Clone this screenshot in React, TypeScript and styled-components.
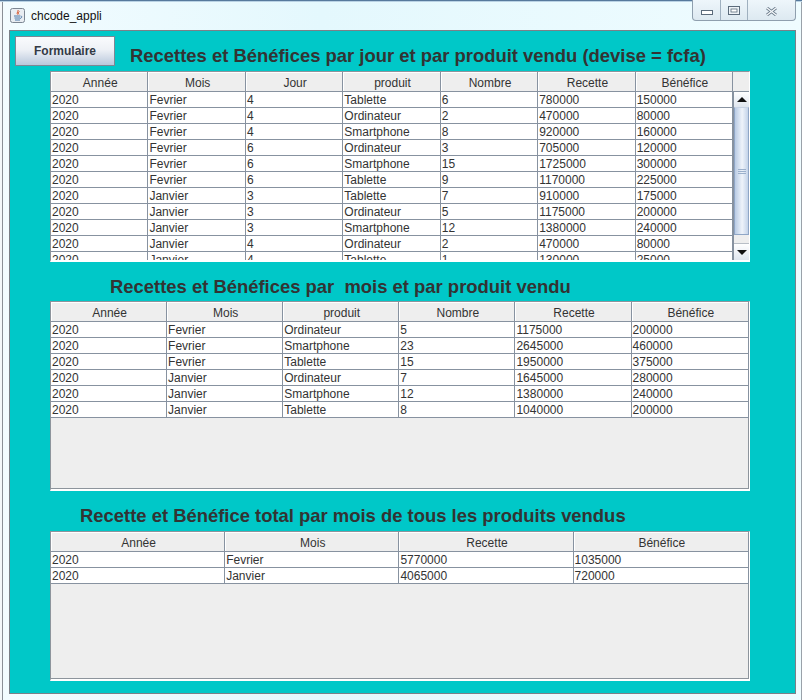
import React from "react";
import styled, { createGlobalStyle } from "styled-components";

const Global = createGlobalStyle`
  html, body { margin: 0; padding: 0; }
  body { width: 802px; height: 700px; overflow: hidden; background: #eafaff; font-family: "Liberation Sans", Arial, sans-serif; }
`;

const Frame = styled.div`
  width: 802px;
  height: 700px;
  box-sizing: border-box;
  padding: 0 6px 6px 9px;
  display: flex;
  flex-direction: column;
  background: linear-gradient(90deg, #f3fcff 0%, #e4f8fd 40%, #effcff 100%);
  box-shadow: inset 0 1px 0 #56799c, inset 0 2px 0 #b9d2e4, inset 2px 0 0 #f4f8fa, inset 3px 0 0 #8a8f96, inset -1px 0 0 #9aa2aa;
`;

const TitleBar = styled.div`
  height: 30px;
  flex: none;
  display: flex;
  align-items: flex-start;
`;

const AppIcon = styled.svg`
  width: 15px;
  height: 15px;
  margin: 8px 6px 0 1px;
  flex: none;
`;

const WindowTitle = styled.span`
  margin-top: 9px;
  font: 12px/15px "Liberation Sans", Arial, sans-serif;
  color: #111;
`;

const Controls = styled.div`
  margin-left: auto;
  width: 104px;
  height: 21px;
  box-sizing: border-box;
  display: flex;
  border: 1px solid #8f9fae;
  border-top: none;
  border-radius: 0 0 4px 4px;
  background: linear-gradient(180deg, #eef6fb, #dde9f1);
`;

const Control = styled.div<{ $w: number; $last?: boolean; $pad: number }>`
  width: ${(p) => p.$w}px;
  display: flex;
  align-items: center;
  justify-content: center;
  padding-top: ${(p) => p.$pad}px;
  box-sizing: border-box;
  border-right: ${(p) => (p.$last ? "none" : "1px solid #9fb0bf")};
`;

const Panel = styled.div`
  flex: 1;
  box-sizing: border-box;
  background: #00c8c8;
  border: 1px solid #7b8088;
  padding: 5px 0 0 5px;
  display: flex;
  flex-direction: column;
`;

const TopRow = styled.div`
  display: flex;
  align-items: flex-start;
  height: 35px;
  flex: none;
`;

const FormButton = styled.button`
  width: 100px;
  height: 30px;
  box-sizing: border-box;
  padding: 0;
  border: 1px solid #7d8794;
  background: linear-gradient(180deg, #fafbfd 0%, #eef1f6 45%, #b9c8dc 100%);
  font: bold 12px "Liberation Sans", Arial, sans-serif;
  color: #333a45;
`;

const Heading = styled.h2<{ $indent: number; $top: number; $bottom?: number }>`
  margin: ${(p) => p.$top}px 0 ${(p) => p.$bottom ?? 0}px ${(p) => p.$indent}px;
  font: bold 18.43px/22px "Liberation Sans", Arial, sans-serif;
  color: #333333;
  white-space: pre;
`;

const TableBox = styled.div<{ $h: number }>`
  margin-left: 35px;
  width: 700px;
  height: ${(p) => p.$h}px;
  box-sizing: border-box;
  flex: none;
  display: flex;
  overflow: hidden;
  background: #eeeeee;
  border: 1px solid #8d949c;
  border-right-color: #fff;
  border-bottom: 2px solid #fff;
  box-shadow: inset -1px -1px 0 #8d949c;
`;

const TableBody = styled.div`
  flex: 1;
  min-width: 0;
  display: flex;
  flex-direction: column;
`;

const HeaderRow = styled.div<{ $cols: number; $col: number }>`
  display: grid;
  grid-template-columns: repeat(${(p) => p.$cols - 1}, ${(p) => p.$col}px) 1fr;
  height: 20px;
  flex: none;
  background: #eeeeee;
  border-bottom: 1px solid #8792a0;
  box-sizing: border-box;
`;

const HeaderCell = styled.div`
  display: flex;
  align-items: center;
  justify-content: center;
  font: 12px "Liberation Sans", Arial, sans-serif;
  color: #333;
  border-right: 1px solid #8792a0;
  box-shadow: inset 1px 1px 0 #fff;
  padding: 3px 0 0 2px;
`;

const Row = styled.div<{ $cols: number; $col: number }>`
  display: grid;
  grid-template-columns: repeat(${(p) => p.$cols - 1}, ${(p) => p.$col}px) 1fr;
  height: 16px;
  flex: none;
  box-sizing: border-box;
  background: #fff;
  border-bottom: 1px solid #8792a0;
`;

const Cell = styled.div`
  font: 12px/17px "Liberation Sans", Arial, sans-serif;
  color: #333;
  padding-left: 1px;
  border-right: 1px solid #8792a0;
  white-space: nowrap;
  overflow: hidden;
`;

const ScrollBar = styled.div`
  width: 16px;
  flex: none;
  display: flex;
  flex-direction: column;
  background: #eeeeee;
  border-left: 1px solid #8792a0;
  box-sizing: border-box;
`;

const Corner = styled.div`
  height: 20px;
  flex: none;
  background: #eee;
  margin-left: -1px;
  border-bottom: 1px solid #8792a0;
  box-sizing: border-box;
`;

const Arrow = styled.div<{ $h: number }>`
  height: ${(p) => p.$h}px;
  flex: none;
  display: flex;
  align-items: center;
  justify-content: center;
  background: linear-gradient(180deg, #ffffff, #dfe6ef);
`;

const Thumb = styled.div`
  height: 128px;
  flex: none;
  box-sizing: border-box;
  border: 1px solid #8fa6c6;
  border-top-color: #c7d3e5;
  background: linear-gradient(90deg, #b9cbe4 0%, #eef3fa 55%, #c3d3e9 100%);
  display: flex;
  flex-direction: column;
  gap: 1px;
  align-items: center;
  justify-content: center;
`;

const Grip = styled.span`
  width: 8px;
  height: 1px;
  background: #9bb0cc;
`;

const Track = styled.div`
  flex: 1;
  background: #eeeeee;
  border-bottom: 1px solid #b8bec6;
`;

type Data = string[][];

const t1h = ["Année", "Mois", "Jour", "produit", "Nombre", "Recette", "Bénéfice"];
const t1: Data = [
  ["2020", "Fevrier", "4", "Tablette", "6", "780000", "150000"],
  ["2020", "Fevrier", "4", "Ordinateur", "2", "470000", "80000"],
  ["2020", "Fevrier", "4", "Smartphone", "8", "920000", "160000"],
  ["2020", "Fevrier", "6", "Ordinateur", "3", "705000", "120000"],
  ["2020", "Fevrier", "6", "Smartphone", "15", "1725000", "300000"],
  ["2020", "Fevrier", "6", "Tablette", "9", "1170000", "225000"],
  ["2020", "Janvier", "3", "Tablette", "7", "910000", "175000"],
  ["2020", "Janvier", "3", "Ordinateur", "5", "1175000", "200000"],
  ["2020", "Janvier", "3", "Smartphone", "12", "1380000", "240000"],
  ["2020", "Janvier", "4", "Ordinateur", "2", "470000", "80000"],
  ["2020", "Janvier", "4", "Tablette", "1", "130000", "25000"],
];
const t2h = ["Année", "Mois", "produit", "Nombre", "Recette", "Bénéfice"];
const t2: Data = [
  ["2020", "Fevrier", "Ordinateur", "5", "1175000", "200000"],
  ["2020", "Fevrier", "Smartphone", "23", "2645000", "460000"],
  ["2020", "Fevrier", "Tablette", "15", "1950000", "375000"],
  ["2020", "Janvier", "Ordinateur", "7", "1645000", "280000"],
  ["2020", "Janvier", "Smartphone", "12", "1380000", "240000"],
  ["2020", "Janvier", "Tablette", "8", "1040000", "200000"],
];
const t3h = ["Année", "Mois", "Recette", "Bénéfice"];
const t3: Data = [
  ["2020", "Fevrier", "5770000", "1035000"],
  ["2020", "Janvier", "4065000", "720000"],
];

function Grid({ head, rows, col }: { head: string[]; rows: Data; col: number }) {
  return (
    <TableBody>
      <HeaderRow $cols={head.length} $col={col}>
        {head.map((h) => (
          <HeaderCell key={h}>{h}</HeaderCell>
        ))}
      </HeaderRow>
      {rows.map((r, i) => (
        <Row key={i} $cols={head.length} $col={col}>
          {r.map((c, j) => (
            <Cell key={j}>{c}</Cell>
          ))}
        </Row>
      ))}
    </TableBody>
  );
}

export default function App() {
  return (
    <Frame>
      <Global />
      <TitleBar>
        <AppIcon viewBox="0 0 15 15">
          <rect x="0.5" y="0.5" width="14" height="14" rx="2" fill="#e9edf2" stroke="#7c8692" />
          <path d="M8 2c1 1.500-2 2.500-.5 4.500M9.500 3.500c-1.500 1-1.500 2-.5 3" fill="none" stroke="#d8552b" strokeWidth="1" />
          <path d="M4 8h6M4.500 10h5.500M5 12h5" stroke="#4a78a8" strokeWidth="1" />
          <path d="M10.500 8c2 0 1.500 2-.5 2.500" fill="none" stroke="#4a78a8" strokeWidth="1" />
        </AppIcon>
        <WindowTitle>chcode_appli</WindowTitle>
        <Controls>
          <Control $w={28} $pad={5}>
            <svg width="12" height="5" viewBox="0 0 12 5">
              <rect x="0.5" y="0.5" width="11" height="4" fill="#fff" stroke="#5b6b7b" />
            </svg>
          </Control>
          <Control $w={27} $pad={1}>
            <svg width="12" height="9" viewBox="0 0 12 9">
              <rect x="0.5" y="0.5" width="11" height="8" fill="#eef3f7" stroke="#5b6b7b" />
              <rect x="3" y="3" width="6" height="3" fill="#fff" stroke="#5b6b7b" strokeWidth="0.8" />
            </svg>
          </Control>
          <Control $w={47} $last $pad={2}>
            <svg width="13" height="9" viewBox="0 0 13 9">
              <path d="M2 1l9 7M11 1l-9 7" stroke="#6a7a8a" strokeWidth="3" />
              <path d="M2 1l9 7M11 1l-9 7" stroke="#f4f7fa" strokeWidth="1.400" />
            </svg>
          </Control>
        </Controls>
      </TitleBar>
      <Panel>
        <TopRow>
          <FormButton>Formulaire</FormButton>
          <Heading $indent={15} $top={9}>Recettes et Bénéfices par jour et par produit vendu (devise = fcfa)</Heading>
        </TopRow>
        <TableBox $h={191}>
          <Grid head={t1h} rows={t1} col={97.45} />
          <ScrollBar>
            <Corner />
            <Arrow $h={15}>
              <svg width="10" height="6" viewBox="0 0 10 6"><path d="M5 0l5 5H0z" fill="#111" /></svg>
            </Arrow>
            <Thumb>
              <Grip /><Grip /><Grip />
            </Thumb>
            <Track />
            <Arrow $h={16}>
              <svg width="10" height="6" viewBox="0 0 10 6"><path d="M5 6L0 1h10z" fill="#111" /></svg>
            </Arrow>
          </ScrollBar>
        </TableBox>
        <Heading $indent={95} $top={14} $bottom={3}>Recettes et Bénéfices par  mois et par produit vendu</Heading>
        <TableBox $h={190}>
          <Grid head={t2h} rows={t2} col={116.12} />
        </TableBox>
        <Heading $indent={65} $top={14} $bottom={4}>Recette et Bénéfice total par mois de tous les produits vendus</Heading>
        <TableBox $h={150}>
          <Grid head={t3h} rows={t3} col={174.2} />
        </TableBox>
      </Panel>
    </Frame>
  );
}
